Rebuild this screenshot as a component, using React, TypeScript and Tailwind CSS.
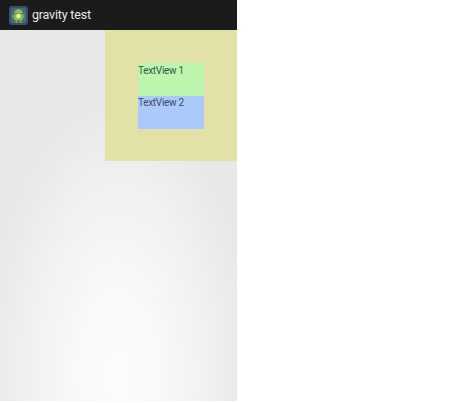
function AppIcon() {
  return (
    <svg width="19" height="19" viewBox="0 0 20 20" className="shrink-0">
      <rect x="0" y="0" width="20" height="20" rx="3.5" fill="#36526b" />
      <rect x="2" y="2" width="16" height="16" rx="3" fill="#4a6a80" />
      <path d="M5.5 8a4.5 4.5 0 0 1 9 0z" fill="#8cc63f" />
      <rect x="5.5" y="8.6" width="9" height="6.4" rx="1" fill="#8cc63f" />
      <rect x="3.8" y="8.6" width="1.2" height="4.5" rx="0.6" fill="#7fb53a" />
      <rect x="15" y="8.6" width="1.2" height="4.5" rx="0.6" fill="#7fb53a" />
      <rect x="7" y="15" width="1.8" height="3" rx="0.9" fill="#7fb53a" />
      <rect x="11.2" y="15" width="1.8" height="3" rx="0.9" fill="#7fb53a" />
      <circle cx="10" cy="10.5" r="2.4" fill="#e4ecc4" />
    </svg>
  );
}

function App() {
  return (
    <div className="w-[474px] h-[403px] bg-white font-['Roboto',sans-serif]">
      <div className="w-[237px] h-[401px] flex flex-col">
        <div className="h-[30px] bg-[#1b1b1b] flex items-center pl-[9px] gap-[4px]">
          <AppIcon />
          <span className="text-[12.5px] tracking-[-0.2px] text-[#e8e8e8]">gravity test</span>
        </div>
        <div className="flex-1 flex justify-end items-start bg-[#e7e7e7] bg-[radial-gradient(ellipse_135px_275px_at_118px_345px,#fbfbfb_0%,#f8f8f8_35%,#f0f0f0_70%,#e8e8e8_100%)]">
          <div className="w-[132px] h-[131px] bg-[#e2e1a8] flex flex-col items-center justify-center">
            <div className="w-[66px] h-[33px] bg-[#bbf5ae] text-[10px] leading-[14px] pt-px tracking-[-0.3px] text-[#3d5445]">TextView 1</div>
            <div className="w-[66px] h-[33px] bg-[#abcafc] text-[10px] leading-[14px] tracking-[-0.3px] text-[#3a4a68]">TextView 2</div>
          </div>
        </div>
      </div>
    </div>
  );
}

export default App;
